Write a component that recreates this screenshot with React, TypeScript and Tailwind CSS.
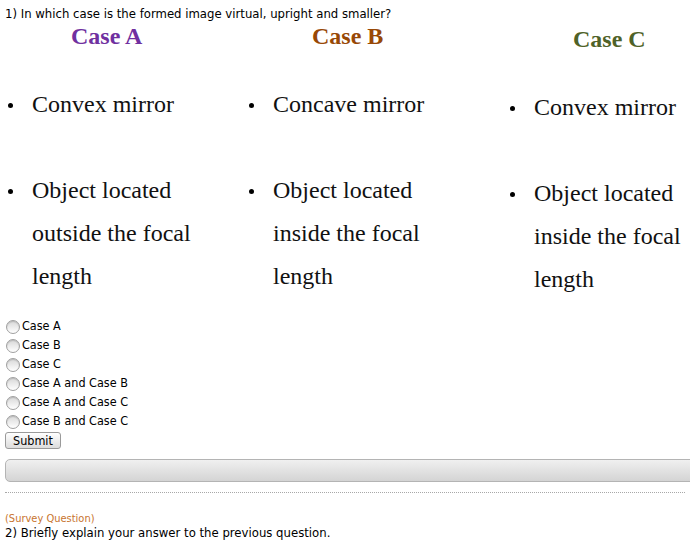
const ui = "font-['DejaVu_Sans_Condensed',Tahoma,sans-serif]";
const serif = "font-['Liberation_Serif','Times_New_Roman',serif]";

type Case = {
  title: string;
  color: string;
  width: string;
  shift: string;
  mirror: string;
  lines: string[];
};

const cases: Case[] = [
  {
    title: "Case A",
    color: "text-[#7030a0]",
    width: "w-[241px]",
    shift: "pt-0",
    mirror: "Convex mirror",
    lines: ["Object located", "outside the focal", "length"],
  },
  {
    title: "Case B",
    color: "text-[#984806]",
    width: "w-[261px]",
    shift: "pt-0",
    mirror: "Concave mirror",
    lines: ["Object located", "inside the focal", "length"],
  },
  {
    title: "Case C",
    color: "text-[#4f6228]",
    width: "w-[183px]",
    shift: "pt-[3px]",
    mirror: "Convex mirror",
    lines: ["Object located", "inside the focal", "length"],
  },
];

const options = [
  "Case A",
  "Case B",
  "Case C",
  "Case A and Case B",
  "Case A and Case C",
  "Case B and Case C",
];

function Bullet({ lines }: { lines: string[] }) {
  return (
    <div className="flex">
      <div className="w-[27px] shrink-0 pl-[3px]">
        <span className="relative -top-[4px] inline-block h-[5px] w-[5px] rounded-full bg-black" />
      </div>
      <div className="whitespace-nowrap">
        {lines.map((l) => (
          <div key={l} className="h-[43px]">
            {l}
          </div>
        ))}
      </div>
    </div>
  );
}

function CaseColumn({ c }: { c: Case }) {
  return (
    <div className={`${c.width} shrink-0 ${c.shift}`}>
      <h2
        className={`pl-[66px] text-[24px] leading-[30px] font-bold ${c.color} whitespace-nowrap`}
      >
        {c.title}
      </h2>
      <div className="mt-[32px] text-[24px] leading-[43px] text-[#111]">
        <Bullet lines={[c.mirror]} />
        <div className="h-[43px]" />
        <Bullet lines={c.lines} />
      </div>
    </div>
  );
}

export default function App() {
  return (
    <div className={`w-[690px] h-[548px] overflow-hidden bg-white text-black ${ui}`}>
      <p className="pl-[5px] pt-[6px] text-[13px] leading-[15px]">
        1) In which case is the formed image virtual, upright and smaller?
      </p>

      <div className={`flex pl-[5px] ${serif}`}>
        {cases.map((c) => (
          <CaseColumn key={c.title} c={c} />
        ))}
      </div>

      <div className="mt-[16px] pl-[5px]">
        {options.map((o) => (
          <label key={o} className="flex h-[19px] items-center text-[12.5px]">
            <span className="ml-[1px] mr-[2px] h-[14px] w-[14px] rounded-full border border-[#a0a0a0] bg-gradient-to-b from-[#d8d8d8] to-white shadow-[inset_0_1px_1px_rgba(0,0,0,0.15)]" />
            {o}
          </label>
        ))}
        <button className="mt-[1px] block h-[17px] rounded-[3px] border border-[#9a9a9a] bg-gradient-to-b from-white to-[#dcdcdc] px-[7px] text-[12.5px] leading-[15px]">
          Submit
        </button>
      </div>

      <div className="mt-[10px] pl-[5px]">
        <div className="h-[23px] w-[700px] rounded-[5px] border border-[#b4b4b4] bg-gradient-to-b from-[#f0f0f0] to-[#d4d4d4]" />
      </div>

      <div className="mx-[5px] mt-[10px] border-t border-dotted border-[#a8a8a8]" />

      <div className="mt-[19px] pl-[5px]">
        <p className="text-[11px] leading-[13px] text-[#c8742e]">(Survey Question)</p>
        <p className="mt-[1px] text-[13px] leading-[14px]">
          2) Briefly explain your answer to the previous question.
        </p>
      </div>
    </div>
  );
}
